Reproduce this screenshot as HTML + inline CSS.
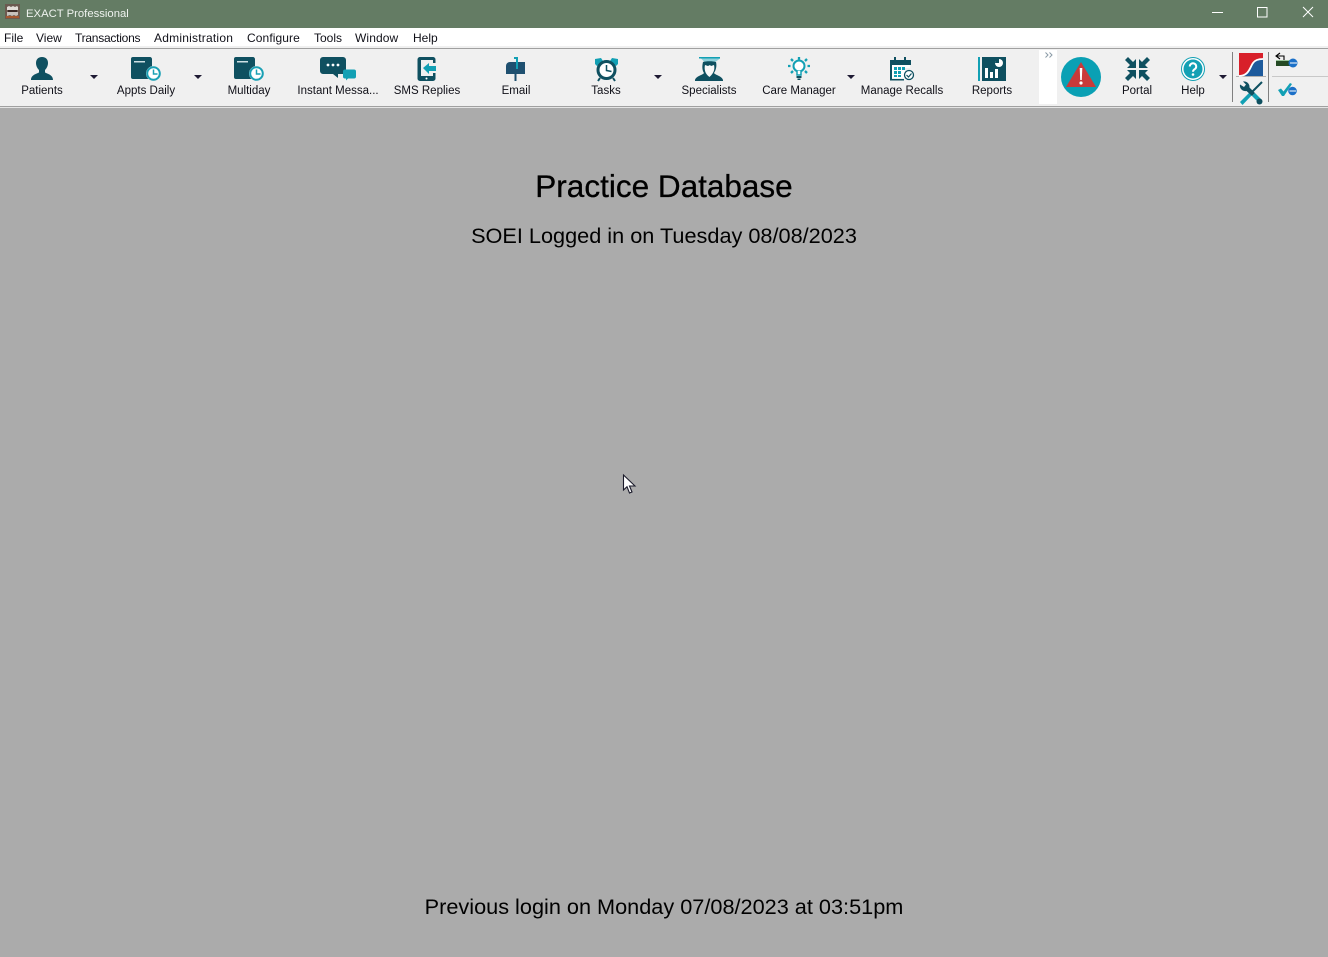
<!DOCTYPE html>
<html lang="en"><head><meta charset="utf-8"><title>EXACT Professional</title>
<style>
html,body{margin:0;padding:0;width:1328px;height:957px;overflow:hidden;background:#ababab;font-family:"Liberation Sans",Arial,sans-serif}
.a{position:absolute}
.t{position:absolute;white-space:nowrap;font-size:11.5px;line-height:14px;color:#101018}
.b{top:84px}
.c{transform:translateX(-50%)}
.n{font-size:12px}
.m{position:absolute;white-space:nowrap;color:#000;left:0;width:1328px;text-align:center}
svg{position:absolute;overflow:visible}
.dd{position:absolute;top:75px;width:0;height:0;border-left:4px solid transparent;border-right:4px solid transparent;border-top:4px solid #1e1a33}
</style></head><body>
<div class="a" style="left:0;top:0;width:1328px;height:28px;background:#647c64"></div>
<svg style="left:5px;top:4px" width="16" height="15" viewBox="0 0 16 15"><rect x="0" y="0" width="15" height="15" fill="#6b5a50"/><path d="M2 3l2-1 2 1 2-1 2 1 2-1 1 1v3H2z" fill="#e2ddd8"/><path d="M2 8h11v3l-2 1-2-1-2 1-2-1-3 1z" fill="#c8c2bc"/><rect x="3" y="6" width="9" height="2" fill="#3a2a26"/><rect x="1" y="12" width="13" height="2" fill="#a5572f"/></svg>
<div class="t" style="left:26px;top:7px;color:#eef2ee;font-size:11.3px">EXACT Professional</div>
<svg style="left:1212px;top:12px" width="11" height="1"><rect width="11" height="1" fill="#fff"/></svg>
<svg style="left:1257px;top:7px" width="10" height="10"><rect x=".5" y=".5" width="9.500" height="9.500" fill="none" stroke="#fff"/></svg>
<svg style="left:1303px;top:7px" width="10" height="10"><path d="M0 0L10 10M10 0L0 10" stroke="#fff" stroke-width="1"/></svg>

<div class="a" style="left:0;top:28px;width:1328px;height:20px;background:#fff"></div>
<div class="t n" style="left:4px;top:31px">File</div>
<div class="t n" style="left:36px;top:31px">View</div>
<div class="t n" style="left:75px;top:31px;letter-spacing:-.25px">Transactions</div>
<div class="t n" style="left:154px;top:31px;letter-spacing:.22px">Administration</div>
<div class="t n" style="left:247px;top:31px;letter-spacing:.1px">Configure</div>
<div class="t n" style="left:314px;top:31px">Tools</div>
<div class="t n" style="left:355px;top:31px;letter-spacing:.1px">Window</div>
<div class="t n" style="left:413px;top:31px">Help</div>

<div class="a" style="left:0;top:46px;width:1328px;height:61px;background:#f0f0f0"></div>
<div class="a" style="left:0;top:48px;width:1328px;height:1px;background:#a0a0a0"></div>
<div class="a" style="left:0;top:106px;width:1328px;height:1px;background:#a0a0a0"></div>
<div class="a" style="left:0;top:107px;width:1328px;height:1px;background:#e4e4e4"></div>
<div class="a" style="left:1039px;top:50px;width:18px;height:54px;background:#fff"></div>

<!-- Patients -->
<svg style="left:30px;top:56px" width="24" height="25" viewBox="0 0 24 25"><path d="M12 1c-4 0-6 2.500-6 6 0 3 1.500 5.500 3 7v2.500C6 18 1 19 1 24h22c0-5-5-6-8-7.500V14c1.500-1.500 3-4 3-7 0-3.500-2-6-6-6z" fill="#0f5060"/></svg>
<div class="t c b" style="left:42px">Patients</div>
<div class="dd" style="left:90px"></div>

<!-- Appts -->
<svg style="left:131px;top:57px" width="31" height="24" viewBox="0 0 31 24"><path d="M2 0h17c1 0 2 1 2 2v20H2a2 2 0 0 1-2-2V2a2 2 0 0 1 2-2z" fill="#0f5060"/><rect x="3" y="4" width="11" height="1.500" fill="#cfe0e4"/><circle cx="22.500" cy="16.500" r="7.500" fill="#f0f0f0"/><circle cx="22.500" cy="16.500" r="6.300" fill="#fff" stroke="#1aa0b4" stroke-width="2"/><path d="M22.500 12.500v4.500h4" fill="none" stroke="#1aa0b4" stroke-width="1.500"/></svg>
<div class="t c b" style="left:146px">Appts Daily</div>
<div class="dd" style="left:194px"></div>

<!-- Multiday -->
<svg style="left:234px;top:57px" width="31" height="24" viewBox="0 0 31 24"><path d="M2 0h17c1 0 2 1 2 2v20H2a2 2 0 0 1-2-2V2a2 2 0 0 1 2-2z" fill="#0f5060"/><rect x="3" y="4" width="11" height="1.500" fill="#cfe0e4"/><circle cx="22.500" cy="16.500" r="7.500" fill="#f0f0f0"/><circle cx="22.500" cy="16.500" r="6.300" fill="#fff" stroke="#1aa0b4" stroke-width="2"/><path d="M22.500 12.500v4.500h4" fill="none" stroke="#1aa0b4" stroke-width="1.500"/></svg>
<div class="t c b" style="left:249px">Multiday</div>

<!-- Instant -->
<svg style="left:320px;top:57px" width="37" height="24" viewBox="0 0 37 24"><path d="M3 0h20a3 3 0 0 1 3 3v11a3 3 0 0 1-3 3h-5v4l-5-4H3a3 3 0 0 1-3-3V3a3 3 0 0 1 3-3z" fill="#0f5060"/><circle cx="8" cy="8" r="1.400" fill="#fff"/><circle cx="13" cy="8" r="1.400" fill="#fff"/><circle cx="18" cy="8" r="1.400" fill="#fff"/><path d="M25 12.500h9a2 2 0 0 1 2 2v5a2 2 0 0 1-2 2h-6l-2 2v-2h-1a2 2 0 0 1-2-2v-5a2 2 0 0 1 2-2z" fill="#12a0b4"/></svg>
<div class="t c b" style="left:338px">Instant Messa...</div>

<!-- SMS -->
<svg style="left:417px;top:57px" width="20" height="24" viewBox="0 0 20 24"><path d="M3 0h13a2.500 2.500 0 0 1 2.500 2.500V6h-2.500V3H4v16h12v-3h2.500v5.500A2.500 2.500 0 0 1 16 24H3a2.500 2.500 0 0 1-2.500-2.500v-19A2.500 2.500 0 0 1 3 0z" fill="#0f5060"/><circle cx="9.500" cy="21.500" r="1" fill="#fff"/><path d="M6 11l6-5v3h7v5h-7v3z" fill="#12a0b4"/></svg>
<div class="t c b" style="left:427px">SMS Replies</div>

<!-- Email -->
<svg style="left:506px;top:57px" width="20" height="24" viewBox="0 0 20 24"><path d="M4 5h15v12H0V9a4 4 0 0 1 4-4z" fill="#1f5070"/><rect x="8.500" y="17" width="2" height="7" fill="#1f5070"/><rect x="10" y="0" width="2" height="12" fill="#12a0b4"/><rect x="8" y="0" width="3" height="2" fill="#12a0b4"/></svg>
<div class="t c b" style="left:516px">Email</div>

<!-- Tasks -->
<svg style="left:595px;top:57px" width="23" height="24" viewBox="0 0 23 24"><path d="M0 7L0 2 6 1l2 3-6 5zM23 7V2l-6-1-2 3 6 5z" fill="#12a0b4"/><circle cx="11.500" cy="13" r="8.500" fill="#fff" stroke="#0f5060" stroke-width="3"/><path d="M11.500 8v5.500l5 1" fill="none" stroke="#0f5060" stroke-width="1.500"/><path d="M5 21l-2 3M18 21l2 3" stroke="#0f5060" stroke-width="2"/></svg>
<div class="t c b" style="left:606px">Tasks</div>
<div class="dd" style="left:654px"></div>

<!-- Specialists -->
<svg style="left:695px;top:57px" width="28" height="24" viewBox="0 0 28 24"><rect x="4" y="0" width="21" height="1.500" fill="#12a0b4"/><path d="M6 1.500h19l-4 3H9z" fill="#8fd0da"/><path d="M8 5c3-1 10-1 13 0 1 4 0 8-2 11 1 2 8 3 9 7v1H0v-1c1-4 8-5 9-7-2-3-2-7-1-11z" fill="#0f5060"/><path d="M10 8l3 1 2-1 1 1 3-1c1 4 0 8-4.500 12C10 17 9 12 10 8z" fill="#f8f8f8"/></svg>
<div class="t c b" style="left:709px">Specialists</div>

<!-- Care Manager -->
<svg style="left:788px;top:57px" width="22" height="24" viewBox="0 0 22 24"><circle cx="11" cy="9" r="5.500" fill="#fff" stroke="#12a0b4" stroke-width="2"/><path d="M9 14v4h4v-4" fill="#fff" stroke="#12a0b4" stroke-width="1.500"/><rect x="8.500" y="19" width="5" height="2" fill="#0f5060"/><rect x="9.500" y="21.500" width="3" height="1.500" fill="#0f5060"/><path d="M11 0v2.500M3 2l2 2M19 2l-2 2M0 9h2.500M19.500 9H22M3 16l2-2M19 16l-2-2" stroke="#12a0b4" stroke-width="2.300"/></svg>
<div class="t c b" style="left:799px">Care Manager</div>
<div class="dd" style="left:847px"></div>

<!-- Manage Recalls -->
<svg style="left:890px;top:57px" width="24" height="24" viewBox="0 0 24 24"><path d="M1 3h19v8h-5v10H1z" fill="#fff"/><path d="M0 3h21v5H0zM0 8h2v14h12v1.500H0z" fill="#0f5060"/><rect x="4" y="0" width="2" height="5" fill="#0f5060"/><rect x="14" y="0" width="2" height="5" fill="#0f5060"/><path d="M4 10h3v3H4zM8 10h3v3H8zM12 10h3v3h-3zM4 14h3v3H4zM8 14h3v3H8zM4 18h3v2H4zM8 18h3v2H8z" fill="#12a0b4"/><circle cx="19" cy="18" r="4.500" fill="#fff" stroke="#0f5060" stroke-width="1.300"/><path d="M16.500 18l2 2 3-3.500" fill="none" stroke="#0f5060" stroke-width="1.200"/></svg>
<div class="t c b" style="left:902px">Manage Recalls</div>

<!-- Reports -->
<svg style="left:978px;top:57px" width="28" height="24" viewBox="0 0 28 24"><rect x="0" y="0" width="2" height="24" fill="#12a0b4"/><rect x="4" y="0" width="24" height="24" fill="#0f5060"/><path d="M7 11h3v10H7zM12 15h3v6h-3zM17 12h3v9h-3z" fill="#fff"/><circle cx="21" cy="6" r="4" fill="#fff"/><path d="M21 2v4h-4a5 5 0 0 0 0-4z" fill="#0f5060"/></svg>
<div class="t c b" style="left:992px">Reports</div>

<svg style="left:1045px;top:52px" width="9" height="6" viewBox="0 0 9 6"><path d="M.5 .5L3 3 .5 5.500M4.500 .5L7 3 4.500 5.500" fill="none" stroke="#8a9aa6" stroke-width="1"/></svg>

<!-- Alert -->
<svg style="left:1061px;top:57px" width="40" height="40" viewBox="0 0 40 40"><circle cx="20" cy="20" r="20" fill="#0aa0b4"/><path d="M20 5L35 30H5z" fill="#c93a3a"/><path d="M18.700 11h2.600l-.5 12h-1.600z" fill="#fff"/><circle cx="20" cy="26" r="1.600" fill="#fff"/></svg>

<!-- Portal -->
<svg style="left:1125px;top:57px" width="25" height="24" viewBox="0 0 25 24"><g fill="#0f5060"><path d="M0 3l3-3 5 5 3-3v9H2l3-3z"/><path d="M25 3l-3-3-5 5-3-3v9h9l-3-3z"/><path d="M0 21l3 3 5-5 3 3v-9H2l3 3z"/><path d="M25 21l-3 3-5-5-3 3v-9h9l-3 3z"/></g></svg>
<div class="t c b" style="left:1137px">Portal</div>

<!-- Help -->
<svg style="left:1181px;top:57px" width="24" height="24" viewBox="0 0 24 24"><circle cx="12" cy="12" r="11.500" fill="#fff" stroke="#12a0b4" stroke-width="1"/><circle cx="12" cy="12" r="9.500" fill="#12a0b4"/><path d="M8.800 9.500a3.200 3.200 0 1 1 5 2.600c-1.200.8-1.800 1.300-1.800 2.700" fill="none" stroke="#fff" stroke-width="2"/><circle cx="12" cy="17.500" r="1.300" fill="#fff"/></svg>
<div class="t c b" style="left:1193px">Help</div>
<div class="dd" style="left:1219px"></div>

<div class="a" style="left:1232px;top:52px;width:1px;height:50px;background:#808080"></div>
<div class="a" style="left:1268px;top:52px;width:1px;height:50px;background:#808080"></div>
<div class="a" style="left:1236px;top:76px;width:30px;height:1px;background:#b0b0b0"></div>
<div class="a" style="left:1272px;top:76px;width:56px;height:1px;background:#c8c8c8"></div>

<!-- logo -->
<svg style="left:1239px;top:53px" width="24" height="23" viewBox="0 0 24 23"><rect width="24" height="23" fill="#d8202a"/><path d="M0 23C10 23 11 14 14 10 16 7 20 6 24 6V23z" fill="#1d5a9c"/><path d="M0 23C10 23 11 14 14 10 16 7 20 6 24 6" fill="none" stroke="#fff" stroke-width="1.800"/></svg>
<!-- tools -->
<svg style="left:1239px;top:81px" width="24" height="24" viewBox="0 0 24 24"><path d="M23 1L12 12" stroke="#0f5060" stroke-width="2"/><path d="M12 10L1 21l2.500 3L14 13z" fill="#12a0b4"/><path d="M1 3.500a5.500 5.500 0 0 0 6.500 6.500L13 15l3-3-5.500-5.500A5.500 5.500 0 0 0 4 .5l3 3-2 2.500z" fill="#0f5060"/><path d="M13 15l3-3 6 6-3 3z" fill="#12a0b4"/><circle cx="20.500" cy="20.500" r="3" fill="#0f5060"/></svg>
<!-- right icons -->
<svg style="left:1275px;top:53px" width="23" height="16" viewBox="0 0 23 16"><path d="M5 0L1 3l4 3M1 3h8v4" fill="none" stroke="#000" stroke-width="1.100"/><rect x="1" y="8" width="15" height="5" fill="#254a24"/><rect x="1" y="7" width="15" height="1" fill="#9ac49a"/><circle cx="18" cy="10" r="4.500" fill="#1b70c8"/><rect x="15" y="9.500" width="7" height="1" fill="#fff"/></svg>
<svg style="left:1278px;top:83px" width="20" height="14" viewBox="0 0 20 14"><path d="M0 7l3-1.500 2.500 3L12 0l2 1L6 13H4z" fill="#12a0b4"/><circle cx="14.500" cy="8" r="4.300" fill="#1b70c8"/><rect x="11.500" y="7.500" width="6.500" height="1" fill="#fff"/></svg>

<div class="m" style="top:169px;font-size:31.5px;line-height:34px;-webkit-text-stroke:.3px #000">Practice Database</div>
<div class="m" style="top:223px;font-size:21.7px;line-height:26px">SOEI Logged in on Tuesday 08/08/2023</div>
<div class="m" style="top:894px;font-size:21.7px;line-height:26px">Previous login on Monday 07/08/2023 at 03:51pm</div>

<!-- cursor -->
<svg style="left:622px;top:474px" width="15" height="21" viewBox="0 0 15 21"><path d="M1.500 1V16L5 12.700 7.500 19l2.500-1-2.500-6H13z" fill="#fff" stroke="#1a1a2a" stroke-width="1.100"/></svg>
</body></html>
